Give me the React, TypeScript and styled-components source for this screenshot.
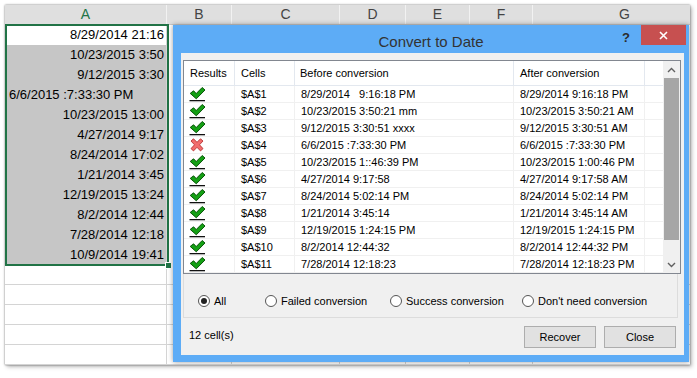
import React from 'react';
import styled, { createGlobalStyle } from 'styled-components';

const Global = createGlobalStyle`
  html, body { margin: 0; padding: 0; background: #fff; }
  body {
    width: 697px; height: 378px; overflow: hidden;
    font-family: "Liberation Sans", Arial, sans-serif;
  }
`;

const COLS = '162px 65px 108px 66px 64px 63px 184px';

const Page = styled.div`
  padding: 5px;
`;

const Sheet = styled.div`
  position: relative;
  width: 685px;
  height: 360px;
  overflow: hidden;
  background: #fff;
  box-shadow: 0 0 2px rgba(0, 0, 0, 0.5), 2px 2px 4px rgba(0, 0, 0, 0.25);
`;

const HeaderRow = styled.div`
  display: grid;
  grid-template-columns: ${COLS};
  height: 20px;
  background: #dfdfdf;
  border-bottom: 1px solid #c8c8c8;
  box-sizing: border-box;
`;

const HeadCell = styled.div<{ $active?: boolean }>`
  border-right: 1px solid #f2f2f2;
  text-align: center;
  font-size: 14px;
  line-height: 19px;
  color: ${(p) => (p.$active ? '#217346' : '#444')};
`;

const Row = styled.div`
  display: grid;
  grid-template-columns: ${COLS};
  height: 20px;
`;

const Cell = styled.div<{ $sel?: boolean; $left?: boolean }>`
  box-sizing: border-box;
  border-right: 1px solid #d4d4d4;
  border-bottom: 1px solid ${(p) => (p.$sel ? '#a0a0a0' : '#d4d4d4')};
  background: ${(p) => (p.$sel ? '#c6c6c6' : '#fff')};
  font-size: 13px;
  line-height: 20px;
  padding: 0 2px 0 4px;
  text-align: ${(p) => (p.$left ? 'left' : 'right')};
  white-space: nowrap;
  color: #000;
`;

const Selection = styled.div`
  position: absolute;
  left: 0;
  top: 19px;
  width: 164px;
  height: 242px;
  box-sizing: border-box;
  border: 2px solid #217346;
  pointer-events: none;
`;

const FillHandle = styled.div`
  position: absolute;
  right: -5px;
  bottom: -5px;
  width: 5px;
  height: 5px;
  background: #217346;
  border: 1px solid #fff;
`;

/* Dialog */
const Dialog = styled.div`
  position: absolute;
  left: 168px;
  top: 20px;
  width: 516px;
  height: 337px;
  background: #5dacf6;
  display: flex;
  flex-direction: column;
  box-shadow: 0 0 5px rgba(0, 0, 0, 0.4);
`;

const TitleBar = styled.div`
  display: grid;
  grid-template-columns: 1fr auto 1fr;
  height: 28px;
`;

const Title = styled.div`
  grid-column: 2;
  font-size: 15px;
  color: #333;
  padding-top: 8px;
`;

const TitleButtons = styled.div`
  grid-column: 3;
  display: flex;
  justify-content: flex-end;
  align-items: flex-start;
  gap: 11px;
  padding-right: 3px;
`;

const Help = styled.span`
  font-size: 13px;
  font-weight: bold;
  color: #2b2b2b;
  padding-top: 5px;
`;

const CloseX = styled.div`
  width: 45px;
  height: 20px;
  background: #c75050;
  display: flex;
  align-items: center;
  justify-content: center;
`;

const Panel = styled.div`
  flex: 1;
  margin: 0 5px 7px 8px;
  background: #f0f0f0;
  padding: 7px 3px 0 2px;
  display: flex;
  flex-direction: column;
`;

const List = styled.div`
  height: 214px;
  box-sizing: border-box;
  border: 1px solid #828790;
  background: #fff;
  display: grid;
  grid-template-columns: 1fr 17px;
`;

const TCOLS = '51px 60px 219px 131px 18px';

const Table = styled.div`
  display: flex;
  flex-direction: column;
`;

const THead = styled.div`
  display: grid;
  grid-template-columns: ${TCOLS};
  height: 25px;
  box-sizing: border-box;
  border-bottom: 1px solid #e3e8ef;
`;

const TH = styled.div<{ $pad: number }>`
  border-right: 1px solid #e3e8ef;
  font-size: 11px;
  line-height: 24px;
  padding-left: ${(p) => p.$pad}px;
  color: #000;
  white-space: nowrap;
  &:last-child { border-right: none; }
`;

const TRow = styled.div`
  display: grid;
  grid-template-columns: ${TCOLS};
  height: 17px;
  box-sizing: border-box;
  border-bottom: 1px solid #f0f0f0;
`;

const TD = styled.div<{ $pad: number }>`
  border-right: 1px solid #f0f0f0;
  font-size: 11px;
  line-height: 16px;
  padding-left: ${(p) => p.$pad}px;
  color: #000;
  white-space: pre;
  display: flex;
  align-items: center;
  &:last-child { border-right: none; }
`;

const ScrollBar = styled.div`
  background: #f0f0f0;
  display: flex;
  flex-direction: column;
`;

const Arrow = styled.div`
  height: 17px;
  display: flex;
  align-items: center;
  justify-content: center;
`;

const Thumb = styled.div`
  height: 162px;
  margin: 0 1px;
  background: #a6a6a6;
`;

const Track = styled.div`
  flex: 1;
`;

const RadioBox = styled.div`
  height: 44px;
  box-sizing: border-box;
  margin-right: 3px;
  border: 1px solid #dcdcdc;
  border-top: none;
  display: grid;
  grid-template-columns: 67px 125px 132px auto;
  align-items: center;
  padding: 10px 0 0 14px;
`;

const RadioItem = styled.label`
  display: flex;
  align-items: center;
  gap: 4px;
  font-size: 11px;
  color: #000;
  white-space: nowrap;
`;

const RadioCircle = styled.span<{ $on?: boolean }>`
  width: 12px;
  height: 12px;
  box-sizing: border-box;
  border-radius: 50%;
  border: 1px solid #555;
  background: #fff;
  display: flex;
  align-items: center;
  justify-content: center;
  &::after {
    content: '';
    display: ${(p) => (p.$on ? 'block' : 'none')};
    width: 6px;
    height: 6px;
    border-radius: 50%;
    background: #222;
  }
`;

const Footer = styled.div`
  flex: 1;
  display: flex;
  align-items: center;
  padding: 0 5px 0 6px;
  gap: 8px;
`;

const Count = styled.div`
  flex: 1;
  font-size: 11px;
  color: #000;
  padding-bottom: 3px;
`;

const Button = styled.button`
  width: 72px;
  height: 22px;
  box-sizing: border-box;
  background: #e1e1e1;
  border: 1px solid #adadad;
  font-family: "Liberation Sans", Arial, sans-serif;
  font-size: 11px;
  color: #000;
  padding: 0;
`;

const CheckIcon = () => (
  <svg width="17" height="15" viewBox="0 0 17 15">
    <polygon
      points="1.2,6.4 4.6,3.8 7.2,6.6 13.2,0.5 16,3 7.3,11.8"
      fill="#14a014"
      stroke="#0a550a"
      strokeWidth="1"
      strokeLinejoin="round"
    />
    <rect x="0.5" y="13" width="15.5" height="1.3" fill="#111" />
  </svg>
);

const CrossIcon = () => (
  <svg width="17" height="15" viewBox="0 0 17 15">
    <polygon
      points="2,3 4.5,0.8 8,4.3 11.5,0.8 14,3 10.5,6.8 14,10.6 11.5,12.9 8,9.3 4.5,12.9 2,10.6 5.5,6.8"
      fill="#f26d6d"
      stroke="#b83232"
      strokeWidth="0.9"
      strokeLinejoin="round"
    />
  </svg>
);

const Chevron = ({ up }: { up?: boolean }) => (
  <svg width="9" height="6" viewBox="0 0 9 6">
    <polyline
      points={up ? '1,5 4.5,1.5 8,5' : '1,1 4.5,4.5 8,1'}
      fill="none"
      stroke="#606060"
      strokeWidth="1.4"
    />
  </svg>
);

const sheetData: { t: string; left?: boolean }[] = [
  { t: '8/29/2014 21:16' },
  { t: '10/23/2015 3:50' },
  { t: '9/12/2015 3:30' },
  { t: '6/6/2015 :7:33:30 PM', left: true },
  { t: '10/23/2015 13:00' },
  { t: '4/27/2014 9:17' },
  { t: '8/24/2014 17:02' },
  { t: '1/21/2014 3:45' },
  { t: '12/19/2015 13:24' },
  { t: '8/2/2014 12:44' },
  { t: '7/28/2014 12:18' },
  { t: '10/9/2014 19:41' },
];

const rows: { ok: boolean; cell: string; before: string; after: string }[] = [
  { ok: true, cell: '$A$1', before: '8/29/2014   9:16:18 PM', after: '8/29/2014 9:16:18 PM' },
  { ok: true, cell: '$A$2', before: '10/23/2015 3:50:21 mm', after: '10/23/2015 3:50:21 AM' },
  { ok: true, cell: '$A$3', before: '9/12/2015 3:30:51 xxxx', after: '9/12/2015 3:30:51 AM' },
  { ok: false, cell: '$A$4', before: '6/6/2015 :7:33:30 PM', after: '6/6/2015 :7:33:30 PM' },
  { ok: true, cell: '$A$5', before: '10/23/2015 1::46:39 PM', after: '10/23/2015 1:00:46 PM' },
  { ok: true, cell: '$A$6', before: '4/27/2014 9:17:58', after: '4/27/2014 9:17:58 AM' },
  { ok: true, cell: '$A$7', before: '8/24/2014 5:02:14 PM', after: '8/24/2014 5:02:14 PM' },
  { ok: true, cell: '$A$8', before: '1/21/2014 3:45:14', after: '1/21/2014 3:45:14 AM' },
  { ok: true, cell: '$A$9', before: '12/19/2015 1:24:15 PM', after: '12/19/2015 1:24:15 PM' },
  { ok: true, cell: '$A$10', before: '8/2/2014 12:44:32', after: '8/2/2014 12:44:32 PM' },
  { ok: true, cell: '$A$11', before: '7/28/2014 12:18:23', after: '7/28/2014 12:18:23 PM' },
];

const letters = ['A', 'B', 'C', 'D', 'E', 'F', 'G'];

export default function App() {
  const sheetRows = Array.from({ length: 17 }, (_, i) => i);
  return (
    <Page>
      <Global />
      <Sheet>
        <HeaderRow>
          {letters.map((l) => (
            <HeadCell key={l} $active={l === 'A'}>
              {l}
            </HeadCell>
          ))}
        </HeaderRow>
        {sheetRows.map((r) => {
          const d = sheetData[r];
          return (
            <Row key={r}>
              <Cell $sel={r > 0 && r < 12} $left={d?.left}>
                {d ? d.t : ''}
              </Cell>
              {letters.slice(1).map((l) => (
                <Cell key={l} />
              ))}
            </Row>
          );
        })}
        <Selection>
          <FillHandle />
        </Selection>

        <Dialog>
          <TitleBar>
            <Title>Convert to Date</Title>
            <TitleButtons>
              <Help>?</Help>
              <CloseX>
                <svg width="9" height="9" viewBox="0 0 9 9">
                  <path d="M1 1 L8 8 M8 1 L1 8" stroke="#fff" strokeWidth="1.6" />
                </svg>
              </CloseX>
            </TitleButtons>
          </TitleBar>
          <Panel>
            <List>
              <Table>
                <THead>
                  <TH $pad={6}>Results</TH>
                  <TH $pad={6}>Cells</TH>
                  <TH $pad={5}>Before conversion</TH>
                  <TH $pad={6}>After conversion</TH>
                  <TH $pad={0} />
                </THead>
                {rows.map((row) => (
                  <TRow key={row.cell}>
                    <TD $pad={5}>{row.ok ? <CheckIcon /> : <CrossIcon />}</TD>
                    <TD $pad={6}>{row.cell}</TD>
                    <TD $pad={6}>{row.before}</TD>
                    <TD $pad={6}>{row.after}</TD>
                    <TD $pad={0} />
                  </TRow>
                ))}
              </Table>
              <ScrollBar>
                <Arrow>
                  <Chevron up />
                </Arrow>
                <Thumb />
                <Track />
                <Arrow>
                  <Chevron />
                </Arrow>
              </ScrollBar>
            </List>
            <RadioBox>
              <RadioItem>
                <RadioCircle $on />
                All
              </RadioItem>
              <RadioItem>
                <RadioCircle />
                Failed conversion
              </RadioItem>
              <RadioItem>
                <RadioCircle />
                Success conversion
              </RadioItem>
              <RadioItem>
                <RadioCircle />
                Don't need conversion
              </RadioItem>
            </RadioBox>
            <Footer>
              <Count>12 cell(s)</Count>
              <Button>Recover</Button>
              <Button>Close</Button>
            </Footer>
          </Panel>
        </Dialog>
      </Sheet>
    </Page>
  );
}
